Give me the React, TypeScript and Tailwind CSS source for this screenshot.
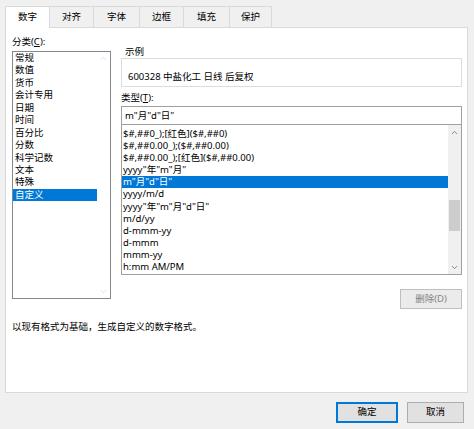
import { ChevronUp, ChevronDown } from 'lucide-react';

// Excel-style "设置单元格格式" number tab, custom format selected.
const TABS = [
  { label: '数字', w: 'w-[45px]' },
  { label: '对齐', w: 'w-[44px]' },
  { label: '字体', w: 'w-[46px]' },
  { label: '边框', w: 'w-[44px]' },
  { label: '填充', w: 'w-[46px]' },
  { label: '保护', w: 'w-[42px]' },
];

const CATEGORIES = ['常规', '数值', '货币', '会计专用', '日期', '时间', '百分比', '分数', '科学记数', '文本', '特殊', '自定义'];

const FORMATS = [
  '$#,##0_);[红色]($#,##0)',
  '$#,##0.00_);($#,##0.00)',
  '$#,##0.00_);[红色]($#,##0.00)',
  'yyyy"年"m"月"',
  'm"月"d"日"',
  'yyyy/m/d',
  'yyyy"年"m"月"d"日"',
  'm/d/yy',
  'd-mmm-yy',
  'd-mmm',
  'mmm-yy',
  'h:mm AM/PM',
];

export default function App() {
  return (
    <div
      className="w-[474px] h-[429px] overflow-hidden bg-[#f0f0f0] text-[9.5px] text-black"
      style={{ fontFamily: '"Noto Sans", "Noto Sans CJK SC", sans-serif' }}
    >
      {/* tab strip */}
      <div className="flex pl-[5px] pt-[6px]">
        {TABS.map((t, i) => (
          <div
            key={t.label}
            className={`${t.w} h-[21px] flex items-center justify-center border-t border-r border-[#d9d9d9] ${i === 0 ? 'border-l bg-white relative z-10 h-[22px]' : 'bg-[#f0f0f0]'}`}
          >
            {t.label}
          </div>
        ))}
      </div>

      {/* panel */}
      <div className="ml-[5px] -mt-px w-[463px] h-[366px] bg-white border border-[#d9d9d9] pl-[6px] pt-[6px]">
        <div className="flex gap-[10px]">
          {/* category column */}
          <div className="w-[99px]">
            <div className="leading-[16px] h-[16px]">
              分类(<span className="underline">C</span>):
            </div>
            <div className="mt-px h-[248px] border border-[#828790] flex">
              <div className="flex-1">
                {CATEGORIES.map((c) => (
                  <div
                    key={c}
                    className={`h-[12.45px] leading-[12.45px] pl-[2px] ${c === '自定义' ? 'bg-[#0078d7] text-white' : ''}`}
                  >
                    {c}
                  </div>
                ))}
              </div>
              <div className="w-[13px] flex flex-col justify-between items-center py-[2px] text-[#c8c8c8]">
                <ChevronUp size={9} strokeWidth={1.5} />
                <ChevronDown size={9} strokeWidth={1.5} />
              </div>
            </div>
          </div>

          {/* type column */}
          <div className="w-[341px]">
            <div className="relative mt-[24px] h-[29px] border border-[#dcdcdc] pl-[6px] pt-[10px] leading-[16px]">
              <span className="absolute -top-[15px] left-[3px] leading-[16px]">示例</span>
              600328 中盐化工 日线 后复权
            </div>
            <div className="mt-[3px] leading-[16px] h-[16px]">
              类型(<span className="underline">T</span>):
            </div>
            <div className="h-[19px] border border-[#a0a0a0] pl-[3px] leading-[17px]">m"月"d"日"</div>
            <div className="-mt-px h-[151px] border border-[#a0a0a0] flex">
              <div className="flex-1 pt-[3px] overflow-hidden">
                {FORMATS.map((f, i) => (
                  <div
                    key={i}
                    className={`h-[12.1px] leading-[12.1px] pl-px whitespace-pre ${i === 4 ? 'bg-[#0078d7] text-white' : ''}`}
                  >
                    {f}
                  </div>
                ))}
              </div>
              <div className="w-[13px] bg-[#f0f0f0] flex flex-col items-center text-[#606060]">
                <div className="h-[14px] flex items-center justify-center">
                  <ChevronUp size={9} strokeWidth={2} />
                </div>
                <div className="h-[61px]" />
                <div className="h-[31px] w-[11px] bg-[#cdcdcd]" />
                <div className="flex-1" />
                <div className="h-[14px] flex items-center justify-center">
                  <ChevronDown size={9} strokeWidth={2} />
                </div>
              </div>
            </div>
            <div className="flex justify-end mt-[14px]">
              <div className="w-[62px] h-[20px] flex items-center justify-center border border-[#bfbfbf] bg-[#cccccc]/40 text-[#838383]">
                删除(D)
              </div>
            </div>
          </div>
        </div>

        <div className="mt-[10px] leading-[16px]">以现有格式为基础，生成自定义的数字格式。</div>
      </div>

      {/* dialog buttons */}
      <div className="flex justify-end gap-[9px] pr-[10px] mt-[9px]">
        <div className="w-[62px] h-[21px] flex items-center justify-center border-2 border-[#0078d7] bg-[#e1e1e1]">确定</div>
        <div className="w-[57px] h-[21px] flex items-center justify-center border border-[#adadad] bg-[#e1e1e1]">取消</div>
      </div>
    </div>
  );
}
